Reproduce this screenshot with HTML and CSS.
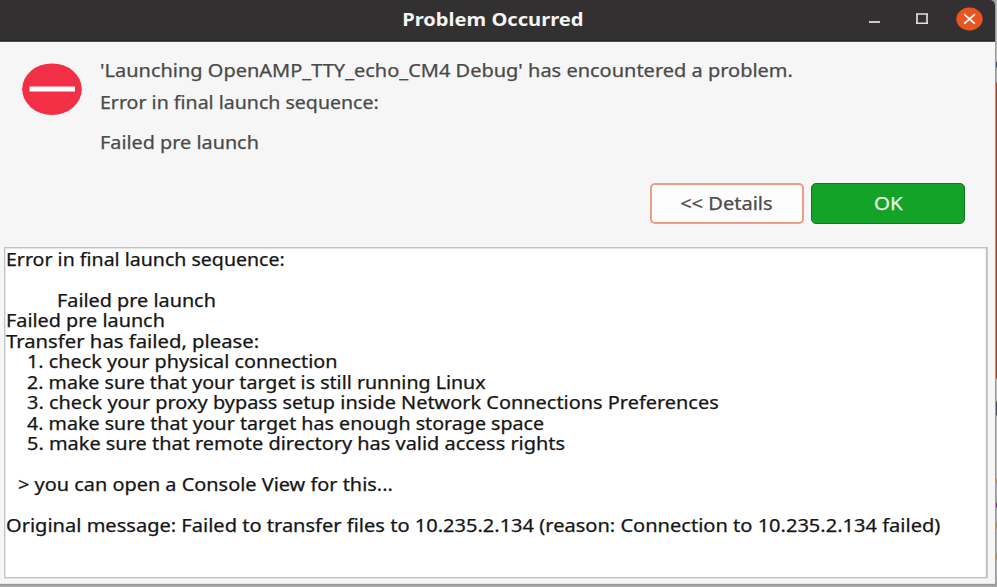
FILE: index.html
```html
<!DOCTYPE html>
<html lang="en">
<head>
<meta charset="utf-8">
<title>Problem Occurred</title>
<link rel="stylesheet" href="styles.css">
</head>
<body>
<div class="desktop">
  <main class="dialog">
    <header class="titlebar">
      <div></div>
      <h1><span class="t s-title">Problem Occurred</span></h1>
      <div class="controls">
        <svg width="13" height="20" viewBox="0 0 13 20"><path d="M1 13h11" stroke="#c9c9c8" stroke-width="2"/></svg>
        <svg width="12" height="20" viewBox="0 0 12 20"><path d="M0 5h12M0 14.2h12" stroke="#dededd" stroke-width="1.5"/><path d="M1 5v9.5M11 5v9.5" stroke="#dededd" stroke-width="1.7"/></svg>
        <svg width="27" height="24" viewBox="0 0 27 24"><ellipse cx="13.5" cy="12" rx="13.2" ry="11.4" fill="#e95420"/><path d="M8.2 7.4l10.6 9.2M18.8 7.4l-10.6 9.2" stroke="#fff" stroke-width="1.9"/></svg>
      </div>
    </header>
    <section class="message">
      <svg class="error" width="60" height="53" viewBox="0 0 60 53"><ellipse cx="30" cy="26.2" rx="29.8" ry="25.8" fill="#f32f45"/><path d="M7.5 26h45.5" stroke="#fff" stroke-width="5"/></svg>
      <div class="copy">
        <p><span class="t s-launching">'Launching OpenAMP_TTY_echo_CM4 Debug' has encountered a problem.</span></p>
        <p><span class="t s-error">Error in final launch sequence:</span></p>
        <p class="reason"><span class="t s-failed">Failed pre launch</span></p>
      </div>
    </section>
    <div class="actions">
      <button class="details"><span class="t s-details">&lt;&lt; Details</span></button>
      <button class="ok"><span class="t s-ok">OK</span></button>
    </div>
    <section class="log">
      <div><span class="t s-error">Error in final launch sequence:</span></div>
      <div></div>
      <div class="tabbed"><span class="t s-failed">Failed pre launch</span></div>
      <div><span class="t s-failed">Failed pre launch</span></div>
      <div><span class="t s-transfer">Transfer has failed, please:</span></div>
      <div class="item"><span class="t s-one">1. check your physical connection</span></div>
      <div class="item"><span class="t s-two">2. make sure that your target is still running Linux</span></div>
      <div class="item"><span class="t s-three">3. check your proxy bypass setup inside Network Connections Preferences</span></div>
      <div class="item"><span class="t s-four">4. make sure that your target has enough storage space</span></div>
      <div class="item"><span class="t s-five">5. make sure that remote directory has valid access rights</span></div>
      <div></div>
      <div class="hint"><span class="t s-hint">&gt; you can open a Console View for this...</span></div>
      <div></div>
      <div><span class="t s-original">Original message: Failed to transfer files to 10.235.2.134 (reason: Connection to 10.235.2.134 failed)</span></div>
    </section>
  </main>
  <aside class="behind"></aside>
</div>
</body>
</html>
```
FILE: styles.css
```css
* { box-sizing: border-box; }
body { margin: 0; width: 997px; height: 587px; overflow: hidden; font: 17.5px/20.52px "Noto Sans", "Open Sans", sans-serif; color: #4a4a4a; }
h1, p { margin: 0; font-size: inherit; }
.desktop { display: grid; grid-template-columns: 995px 2px; height: 587px; background: linear-gradient(#999 0 585px, #aaa 586px 587px); }
.dialog { height: 584px; background: #f6f6f6; border-bottom: 1px solid #e6e6e6; border-radius: 0 5px 0 0; overflow: hidden; }
.behind { background: linear-gradient(#bbb 0 62px, #4c5560 62px 67px, #aaa 68px 82px, #a64322 83px 378px, #bbb 379px 401px, #4b5265 402px 415px, #bbb 416px 478px, #b39154 479px 483px, #aaa 484px 502px, #793a79 503px 507px, #aaa 508px 522px, #b39154 523px 528px, #aaa 529px 553px, #b39154 554px 559px, #aaa 560px); border-left: 1px solid #9c9c9c; }

/* Horizontal stretch for each line of text */
.t { display: inline-block; white-space: nowrap; transform-origin: 0 50%; -webkit-text-stroke: .25px currentColor; }
.s-title { transform: scaleX(1.15); transform-origin: 50% 50%; -webkit-text-stroke: 0; }
.s-launching { transform: scaleX(1.142); }
.s-error { transform: scaleX(1.117); }
.s-failed { transform: scaleX(1.132); }
.s-transfer { transform: scaleX(1.158); }
.s-one { transform: scaleX(1.131); }
.s-two { transform: scaleX(1.12); }
.s-three { transform: scaleX(1.138); }
.s-four { transform: scaleX(1.123); }
.s-five { transform: scaleX(1.139); }
.s-hint { transform: scaleX(1.137); }
.s-original { transform: scaleX(1.1455); }
.s-details { transform: scaleX(1.145); transform-origin: 50% 50%; }
.s-ok { transform: scaleX(1.17); transform-origin: 50% 50%; }

.titlebar { display: grid; grid-template-columns: 1fr auto 1fr; height: 42px; background: #333031; border-bottom: 1px solid #4c4a4a; box-shadow: inset 0 -1px #282627; color: #f4f4f3; }
.titlebar h1 { padding: 9px 9px 0 0; font-weight: 700; }
.controls { display: flex; justify-content: flex-end; align-items: center; gap: 35px; padding-right: 12px; height: 38px; }
.controls svg:last-child { margin-left: -7px; }
.message { display: flex; gap: 18px; height: 141px; padding: 18px 0 0 22px; }
.error { margin-top: 3px; flex: none; }
.copy p { height: 32px; }
.copy .reason { margin-top: 8px; }
.actions { display: flex; justify-content: flex-end; gap: 7.5px; height: 64px; padding-right: 30.5px; }
button { width: 153.5px; height: 41px; padding: 0 0 1px; border-radius: 5px; font: inherit; color: #4a4a4a; }
.details { background: #fdfdfd; border: 2px solid #eb9e83; }
.ok { background: #14a329; border: 1px solid #127322; color: #e6f5e8; }
.log { width: 984px; height: 331px; margin-left: 4px; padding: .5px 0 0 .5px; background: #fff; border: 1px solid #c2c2c2; border-right: 2px solid #c6c6c6; box-shadow: inset 0 1px #e4e4e4, inset 1px 0 #e9e9e9, inset -1px 0 #efefef, 0 1px #e4e4e4; color: #161616; }
.log div { height: 20.54px; }
.log .tabbed { padding-left: 51.5px; }
.log .item { padding-left: 21px; }
.log .hint { padding-left: 12.5px; }
```
